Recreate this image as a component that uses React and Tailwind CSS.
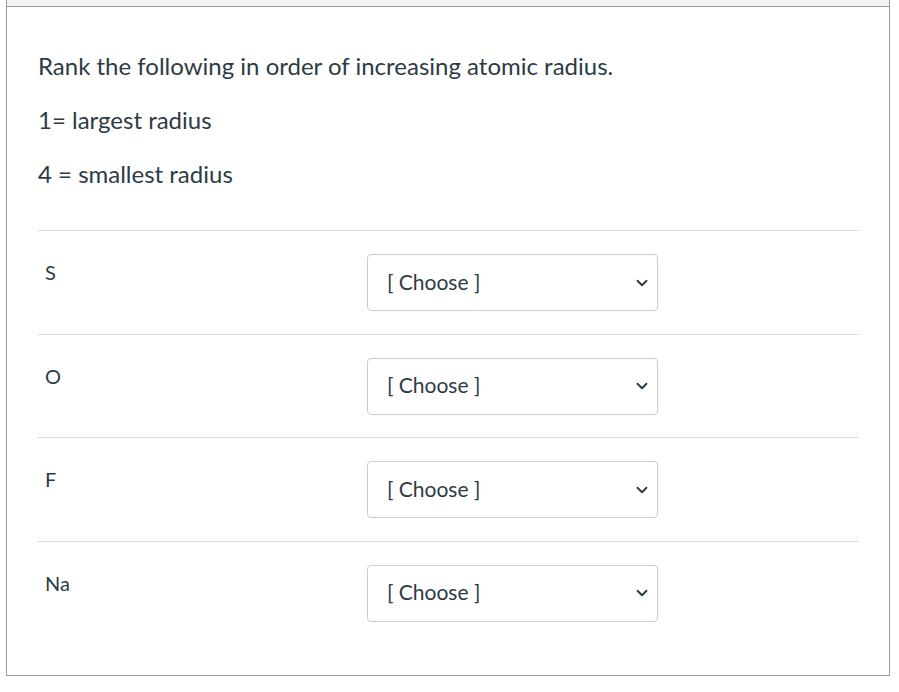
import { ChevronDown } from 'lucide-react';

const rows = ['S', 'O', 'F', 'Na'];

const Row = ({ label, last }) => (
  <div className={`flex items-start border-t border-[#dcdcdc] ${last ? 'h-[90px]' : 'h-[103.5px]'}`}>
    <div className="w-[329px] pl-[7px] pt-[28px] text-[20px] leading-[26px]">{label}</div>
    <div className="mt-[23px] flex h-[57px] w-[291px] items-center justify-between rounded-[4px] border border-[#c7cdd1] bg-white pl-[19px] pr-[6px]">
      <span className="pb-[2px] text-[21px]">[ Choose ]</span>
      <ChevronDown size={18} strokeWidth={2.5} className="text-[#2d3b45]" />
    </div>
  </div>
);

export default function App() {
  return (
    <div
      className="h-[692px] w-[899px] bg-white pl-[6px] text-[#2d3b45]"
      style={{ fontFamily: 'Lato, "Noto Sans", sans-serif' }}
    >
      <div className="h-[676px] w-[884px] border-x border-b border-[#9b9b9b]">
        <div className="h-[7px] border-b border-[#9b9b9b] bg-[#f5f5f5]" />
        <div className="px-[31px] pt-[42px]">
          <p className="mb-[21px] text-[24px] leading-[33px]">Rank the following in order of increasing atomic radius.</p>
          <p className="mb-[21px] text-[24px] leading-[33px]">1= largest radius</p>
          <p className="text-[24px] leading-[33px]">4 = smallest radius</p>
          <div className="mt-[40px] w-[821px]">
            {rows.map((r, i) => (
              <Row key={r} label={r} last={i === rows.length - 1} />
            ))}
          </div>
        </div>
      </div>
    </div>
  );
}
